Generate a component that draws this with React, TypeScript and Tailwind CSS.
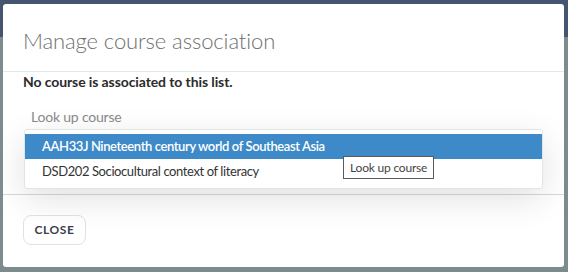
import React, { useState } from 'react';

const courses = [
  { code: 'AAH33J', name: 'Nineteenth century world of Southeast Asia' },
  { code: 'DSD202', name: 'Sociocultural context of literacy' },
];

export default function App() {
  const [query, setQuery] = useState('');
  const [active, setActive] = useState(0);

  return (
    <div
      className="min-h-screen bg-[linear-gradient(to_bottom,#45546f_0,#45546f_37px,#7c8b8e_37px)] pt-[4px] pl-[3px] pr-[4px] pb-[4px]"
      style={{ fontFamily: 'Lato, "Noto Sans", sans-serif' }}
    >
      <div className="w-[561px] h-[263px] bg-white rounded-[3px] flex flex-col overflow-hidden">
        {/* Header */}
        <div className="h-[68px] px-[20px] flex items-center border-b border-[#e3e9e9]">
          <h2 className="text-[22px] font-light text-[#707070] tracking-[-0.1px] pt-[6px]">
            Manage course association
          </h2>
        </div>

        {/* Body */}
        <div className="flex-1 flex flex-col">
          <p className="px-[20px] h-[20px] leading-[20px] text-[14px] font-bold text-[#2b2b2b] tracking-[-0.1px]">
            No course is associated to this list.
          </p>
          <div className="px-[21px] mt-[11px]">
            <input
              value={query}
              onChange={(e) => setQuery(e.target.value)}
              placeholder="Look up course"
              className="w-full h-[26px] pl-[7px] text-[14px] tracking-[-0.2px] text-[#333] placeholder:text-[#8a8a8a] outline-none bg-transparent"
            />
            {/* Dropdown */}
            <div className="relative h-[60px] bg-white border border-[#dfe6e6] rounded-[3px] py-[4px] shadow-[0_10px_34px_rgba(0,0,0,0.12)]">
              {courses.map((c, i) => (
                <div
                  key={c.code}
                  onMouseEnter={() => setActive(i)}
                  className={`px-[17px] text-[13px] tracking-[-0.4px] flex items-center ${
                    i === 0 ? 'h-[25px]' : 'h-[26px]'
                  } ${
                    active === i
                      ? 'bg-[#3e8ac8] text-white font-semibold'
                      : 'text-[#333]'
                  }`}
                >
                  {c.code} {c.name}
                </div>
              ))}
              {/* Tooltip */}
              <div className="absolute left-[318px] top-[26px] h-[23px] px-[6px] flex items-center bg-white border border-[#5a5a5a] text-[12px] tracking-[-0.2px] text-[#444]">
                Look up course
              </div>
            </div>
          </div>
        </div>

        {/* Footer */}
        <div className="h-[73px] border-t border-[#d8d8d8] px-[20px] pt-[20px]">
          <button className="h-[30px] w-[63px] rounded-[8px] border border-[#e2e2e2] text-[12px] font-bold tracking-[0.6px] text-[#3b404a]">
            CLOSE
          </button>
        </div>
      </div>
    </div>
  );
}
